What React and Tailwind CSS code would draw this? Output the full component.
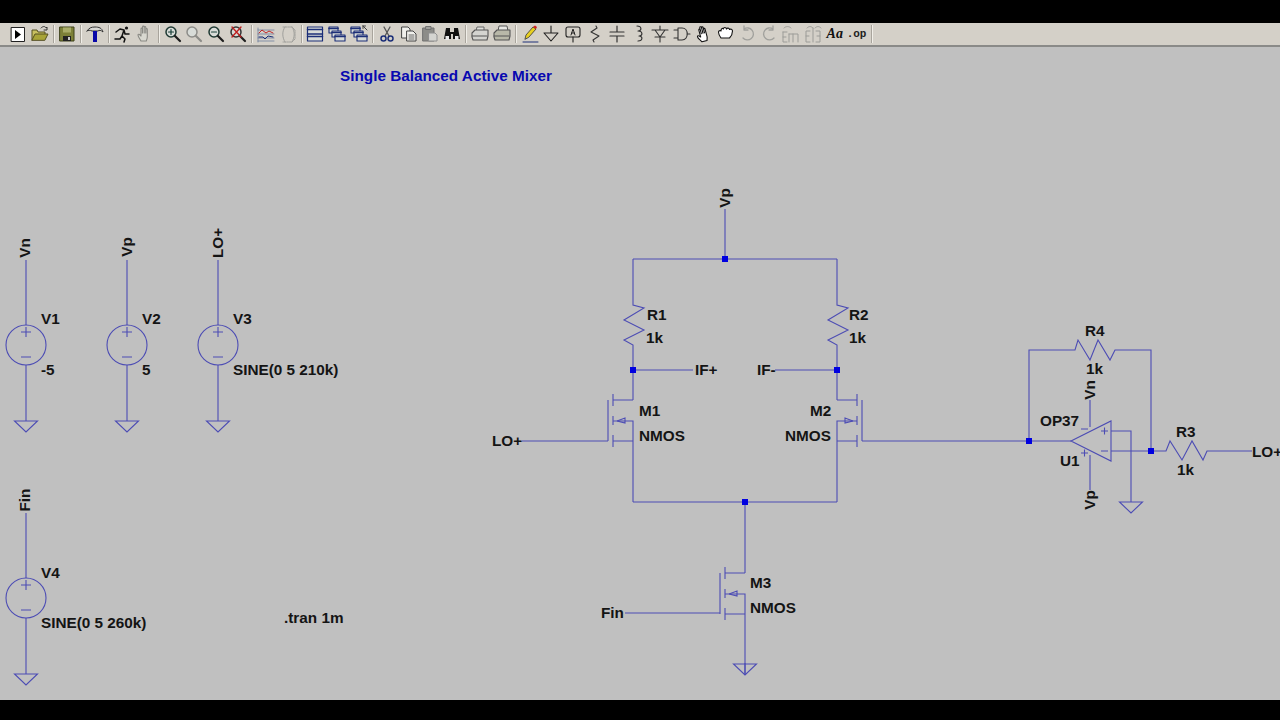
import React from 'react';

const WIRE = '#4c4cb4';

const Icon = ({ children }) => (
  <svg viewBox="0 0 18 18" className="w-[18px] h-[18px]" fill="none" strokeLinecap="round" strokeLinejoin="round">
    {children}
  </svg>
);

const Magnifier = ({ lens = '#1d1d1d', handle = '#1d1d1d', children }) => (
  <>
    <circle cx="7" cy="7" r="5" stroke={lens} strokeWidth="1.5" fill="#d8dcd8" />
    <path d="M11 11l5 5" stroke={handle} strokeWidth="2.2" />
    {children}
  </>
);

const Hand = ({ fill, stroke }) => (
  <path
    d="M5 16c-1-2-3-4-3-6 0-1 1.5-1 2 0l1 1V4c0-1.200 1.500-1.200 1.500 0v4-6c0-1.200 1.700-1.200 1.700 0v6-5.500c0-1.200 1.600-1.200 1.600 0V8 4.500c0-1.200 1.500-1.200 1.500 0V12c0 2-1 3-1 4z"
    fill={fill}
    stroke={stroke}
    strokeWidth="1.100"
  />
);

const Windows = ({ arrow }) => (
  <>
    <rect x="1" y="2" width="9" height="6" fill="#d8dcd8" stroke="#1c2f78" strokeWidth="1.100" />
    <path d="M1 3.500h9" stroke="#1c2f78" strokeWidth="1.600" />
    <rect x="4" y="6" width="9" height="6" fill="#d8dcd8" stroke="#1c2f78" strokeWidth="1.100" />
    <path d="M4 7.500h9" stroke="#1c2f78" strokeWidth="1.600" />
    <rect x="7" y="10" width="10" height="6" fill="#d8dcd8" stroke="#1c2f78" strokeWidth="1.100" />
    <path d="M7 11.500h10" stroke="#1c2f78" strokeWidth="1.600" />
    {arrow && <path d="M13 1l4 4M13 1h2.500M13 1v2.500" stroke="#444" strokeWidth="1" />}
  </>
);

const Printer = ({ dark }) => (
  <>
    {dark && <path d="M5 6l1-5h8l1 5z" fill="#e8e8e4" stroke="#555" strokeWidth="1" />}
    {!dark && <path d="M5 6l1-4h7v4z" fill="#e0e0dc" stroke="#666" strokeWidth="1" />}
    <path d="M1 8l3-3h13v6l-1 4H2l-1-3z" fill={dark ? '#b8b8a8' : '#d4d4d0'} stroke="#555" strokeWidth="1.100" />
    <path d="M1 11h15" stroke="#555" strokeWidth="1" />
  </>
);

const icons = [
  // simulation file group
  [
    <Icon key="new">
      <rect x="2.500" y="2.500" width="13" height="14" fill="#fff" stroke="#222" />
      <path d="M6 5l6 4.500-6 4.500z" fill="#000" />
    </Icon>,
    <Icon key="open">
      <path d="M1 15V5h5l1 2h7v2" fill="#c8c060" stroke="#555020" />
      <path d="M1 15l3-6h13l-3 6z" fill="#a8a438" stroke="#555020" />
      <path d="M10 3c2-2 4-2 5 0l1-1v3h-3" stroke="#333" strokeWidth="1" />
    </Icon>,
  ],
  [
    <Icon key="save">
      <path d="M2 2h14v14H2z" fill="#7c8038" stroke="#3c4018" />
      <rect x="5" y="2.500" width="8" height="5" fill="#a8ac68" />
      <rect x="5" y="11" width="8" height="5" fill="#222" />
      <rect x="10" y="12" width="2" height="3" fill="#ccc" />
    </Icon>,
  ],
  [
    <Icon key="hammer">
      <path d="M1 6c2-3 4-4 8-4s7 1 8 5c-2-2-4-2-5-1H6C4 5 2 5 1 6z" fill="#d8d8d4" stroke="#333" />
      <rect x="7" y="6" width="4" height="11" fill="#0808a8" />
    </Icon>,
  ],
  [
    <Icon key="run">
      <circle cx="12.500" cy="3" r="1.600" fill="#111" />
      <path d="M2 7l4-3 4 1 1 4 4 0M10 5L8 11l3 3-1 3M8 11l-2 3H1" stroke="#111" strokeWidth="1.500" />
    </Icon>,
    <Icon key="halt">
      <Hand fill="#d8d8d0" stroke="#8a8a84" />
    </Icon>,
  ],
  [
    <Icon key="zoomin">
      <Magnifier lens="#1f3a34" >
        <path d="M4.500 7h5M7 4.500v5" stroke="#184038" strokeWidth="1.200" />
      </Magnifier>
    </Icon>,
    <Icon key="zoomfit">
      <Magnifier lens="#8c8c88" handle="#8c8c88" />
    </Icon>,
    <Icon key="zoomout">
      <Magnifier lens="#1f3a34">
        <path d="M4.500 7h5" stroke="#184038" strokeWidth="1.200" />
      </Magnifier>
    </Icon>,
    <Icon key="zoomoff">
      <Magnifier lens="#333">
        <path d="M3 2l9 10M12 2L3 12" stroke="#c02020" strokeWidth="1.400" />
      </Magnifier>
    </Icon>,
  ],
  [
    <Icon key="wave">
      <path d="M1 3v14M1 16h16M1 5h16M1 9h16M1 13h16" stroke="#7080a0" strokeWidth="0.800" />
      <path d="M2 8l3-3 4 3 3-2 4 2" stroke="#c02828" strokeWidth="1" />
      <path d="M2 12h4l2 2 3-3 5 1" stroke="#1c2f78" strokeWidth="1" />
    </Icon>,
    <Icon key="wavegray">
      <path d="M4 2h9l3 3v9l-3 3H4" stroke="#a0a09c" strokeWidth="1" strokeDasharray="1.500 1" />
      <path d="M6 2c-3 4-3 10 0 15M13 2c3 4 3 10 0 15" stroke="#a0a09c" strokeWidth="1" />
    </Icon>,
  ],
  [
    <Icon key="tile-h">
      <rect x="1.500" y="2" width="15" height="14" fill="#d8dcd8" stroke="#1c2f78" strokeWidth="1.200" />
      <path d="M1.500 4.500h15M1.500 9h15M1.500 11.500h15" stroke="#1c2f78" strokeWidth="1.500" />
    </Icon>,
    <Icon key="cascade">
      <Windows />
    </Icon>,
    <Icon key="arrange">
      <Windows arrow />
    </Icon>,
  ],
  [
    <Icon key="cut">
      <path d="M6 2l5 9M12 2l-5 9" stroke="#555" strokeWidth="1.300" />
      <circle cx="5.500" cy="13.500" r="2.500" stroke="#1c2f78" strokeWidth="1.500" />
      <circle cx="12.500" cy="13.500" r="2.500" stroke="#1c2f78" strokeWidth="1.500" />
    </Icon>,
    <Icon key="copy">
      <path d="M2 2h6l2 2v9H2z" fill="#f0f0ec" stroke="#444" />
      <path d="M7 6h6l3 3v7H7z" fill="#f0f0ec" stroke="#444" />
      <path d="M9 10h5M9 12h5M9 14h5" stroke="#444" strokeWidth="0.800" />
    </Icon>,
    <Icon key="paste">
      <rect x="2" y="3" width="11" height="13" fill="#8c8c88" stroke="#707070" />
      <rect x="5" y="1.500" width="5" height="3" fill="#a0a09c" stroke="#707070" />
      <path d="M8 8h6l2 2v6H8z" fill="#d4d4d0" stroke="#909090" />
    </Icon>,
    <Icon key="find">
      <path d="M3 3h4v4h4V3h4l2 11H10V9H8v5H1z" fill="#111" />
      <rect x="2.500" y="11" width="3.500" height="4" fill="#e8e8e8" />
      <rect x="12" y="11" width="3.500" height="4" fill="#e8e8e8" />
    </Icon>,
  ],
  [
    <Icon key="print">
      <Printer />
    </Icon>,
    <Icon key="setup">
      <Printer dark />
    </Icon>,
  ],
  [
    <Icon key="pencil">
      <path d="M2 17h15" stroke="#1c2f78" strokeWidth="1" />
      <path d="M4 14l1-4 7-8 3 2-7 8z" fill="#e8d020" stroke="#333" strokeWidth="0.800" />
      <path d="M12 2l3 2 1-2-2-1.500z" fill="#d02020" />
    </Icon>,
    <Icon key="gnd">
      <path d="M9 1v7M2 8h14L9 16z" stroke="#222" strokeWidth="1.100" />
    </Icon>,
    <Icon key="label">
      <rect x="2" y="2" width="14" height="10" rx="2" stroke="#222" strokeWidth="1.100" />
      <path d="M9 12v5" stroke="#222" strokeWidth="1.100" />
      <path d="M7 10l2-6 2 6M7.700 8h2.600" stroke="#222" strokeWidth="1" />
    </Icon>,
    <Icon key="res">
      <path d="M10 1l1 2-6 4 8 4-6 4 1 2" stroke="#333" strokeWidth="1.100" />
    </Icon>,
    <Icon key="cap">
      <path d="M9 1v6M2 7h14M2 11h14M9 11v6" stroke="#333" strokeWidth="1.200" />
    </Icon>,
    <Icon key="ind">
      <path d="M7 1c5 0 5 5 1 5 5 0 5 5 1 5 4 0 4 5-1 5" stroke="#333" strokeWidth="1.200" />
    </Icon>,
    <Icon key="diode">
      <path d="M1 5h16M4 5l5 7 5-7M9 1v4M4 12h10M9 12v5" stroke="#333" strokeWidth="1.100" />
    </Icon>,
    <Icon key="comp">
      <path d="M1 5h4M1 13h4M5 3v12h4c7 0 7-12 0-12zM14 9h3" stroke="#333" strokeWidth="1.100" />
    </Icon>,
    <Icon key="move">
      <g transform="rotate(-15 9 9)">
        <Hand fill="#fff" stroke="#111" />
      </g>
    </Icon>,
    <Icon key="drag">
      <path d="M4 13C2 10 1 7 2 6s2 0 2 0c0-3 2-3 2.500-2 0-2 2.500-2 3 0 .5-1.500 3-1 3 .5 1-1 3 0 3 1.500 0 4-2 6-3 7z" fill="#fff" stroke="#111" strokeWidth="1.100" />
    </Icon>,
    <Icon key="undo">
      <path d="M5 4a6 6 0 1 1-1 9M5 1v4h4" stroke="#a0a09c" strokeWidth="1.300" />
    </Icon>,
    <Icon key="redo">
      <path d="M13 4a6 6 0 1 0 1 9M13 1v4H9" stroke="#a0a09c" strokeWidth="1.300" />
    </Icon>,
    <Icon key="rot">
      <path d="M1 7h4M1 7v10h4M1 12h3M7 9v8M7 9h9v8M11 9v8M2 3c2-2 5-2 7 0" stroke="#9c9c98" strokeWidth="1" />
    </Icon>,
    <Icon key="mirror">
      <path d="M6 6H2v11h4M2 11h3M12 6h4v11h-4M16 11h-3M9 3v14M3 3c2-2 4-2 6 0M11 3c2-2 4-2 6 0" stroke="#9c9c98" strokeWidth="1" />
    </Icon>,
    <span key="text" className="font-['Liberation_Serif'] font-bold italic text-[14px] leading-none text-[#111]">Aa</span>,
    <span key="op" className="font-['Liberation_Mono'] font-bold text-[11px] leading-none text-[#222]">.op</span>,
  ],
];

const Toolbar = () => (
  <div className="flex h-[22px] items-center bg-[#d4d0c8] border-b-2 border-[#8a8a88] pl-[7px] box-content h-[20px]">
    {icons.map((group, i) => (
      <React.Fragment key={i}>
        {i > 0 && <div className="w-[2px] h-[18px] mx-[2px] border-l border-r border-l-[#a8a49c] border-r-[#f0eee8]" />}
        {group.map((icon) => (
          <div key={icon.key} className="flex w-[21.800px] h-[20px] items-center justify-center">
            {icon}
          </div>
        ))}
      </React.Fragment>
    ))}
    <div className="w-[2px] h-[18px] ml-[4px] border-l border-r border-l-[#a8a49c] border-r-[#f0eee8]" />
  </div>
);

const Label = ({ className, children }) => (
  <span className={`absolute -translate-y-1/2 whitespace-nowrap font-['Liberation_Sans'] font-bold text-[15.300px] leading-none text-[#141414] ${className}`}>
    {children}
  </span>
);

const Ground = ({ x, y }) => <path d={`M${x - 11.500} ${y}h23L${x} ${y + 11}z`} />;

const Source = ({ x, y, top, bottom }) => (
  <>
    <path d={`M${x} ${top}V${y - 20}M${x} ${y + 20}V${bottom}`} />
    <circle cx={x} cy={y} r="20" />
    <path d={`M${x - 5} ${y - 13}h10M${x} ${y - 18}v10M${x - 5} ${y + 12}h10`} />
    <Ground x={x} y={bottom} />
  </>
);

const Nmos = ({ x, y, dir }) => {
  // x is the drain/source rail, y the drain line, dir -1 for a gate on the left
  const c = x + dir * 20;
  const g = x + dir * 25;
  return (
    <>
      <path d={`M${x} ${y}H${c}M${c} ${y - 6}v12M${c} ${y + 16}v9M${c} ${y + 35}v12M${g} ${y}V${y + 41}M${c} ${y + 41}H${x}`} />
      <path d={`M${c} ${y + 21}H${x}V${y + 102 - 0}`} />
      <path d={`M${c + dir * -4} ${y + 21}l${dir * -8} -3v5l${dir * 8} -2`} />
    </>
  );
};

const Schematic = () => (
  <svg viewBox="0 45 1280 652" className="absolute inset-0 w-[1280px] h-[652px]" fill="none" stroke={WIRE} strokeWidth="1.100">
    <Source x={26} y={343} top={258} bottom={419} />
    <Source x={127} y={343} top={258} bottom={419} />
    <Source x={218} y={343} top={258} bottom={419} />
    <Source x={26} y={596} top={511} bottom={672} />

    {/* top rail */}
    <path d="M725 207V257M633 257H837" />
    <path d="M633 257V303L644 306 624 318 644 328 624 338 633 343V398" />
    <path d="M837 257V303L848 306 828 318 848 328 828 338 837 343V398" />
    <path d="M633 368H693M775 368H837" />

    {/* mixer pair */}
    <Nmos x={633} y={398} dir={-1} />
    <Nmos x={837} y={398} dir={1} />
    <path d="M522 439H608M862 439H1071" />
    <path d="M633 500H837" />
    <path d="M745 500V571" />
    <Nmos x={745} y={571} dir={-1} />
    <path d="M625 611H720M745 661V673" />
    <Ground x={745} y={662} />

    {/* output stage */}
    <path d="M1029 439V348H1075L1078 338 1090 358 1098 338 1110 358 1115 348H1151V449" />
    <path d="M1071 439L1111 419V459z" />
    <path d="M1081 427h7M1081 451h7M1084.500 447.500v7M1101 429h7M1104.500 425.500v7M1101 449h7" />
    <path d="M1090 398V425M1090 453V488" />
    <path d="M1111 429H1131V500" />
    <Ground x={1131} y={500} />
    <path d="M1111 449H1166L1170 439 1182 458 1192 439 1203 458 1207 449H1252" />

    {/* junctions */}
    <g fill="#0000e0" stroke="none">
      <rect x="722" y="254" width="6" height="6" />
      <rect x="630" y="365" width="6" height="6" />
      <rect x="834" y="365" width="6" height="6" />
      <rect x="742" y="497" width="6" height="6" />
      <rect x="1026" y="436" width="6" height="6" />
      <rect x="1148" y="446" width="6" height="6" />
    </g>
  </svg>
);

const Labels = () => (
  <>
    <span className="absolute left-[340px] top-[29px] -translate-y-1/2 whitespace-nowrap font-['Liberation_Sans'] font-bold text-[15.300px] leading-none text-[#0808b0]">
      Single Balanced Active Mixer
    </span>

    <Label className="left-[25px] top-[201px] -translate-x-1/2 -rotate-90">Vn</Label>
    <Label className="left-[127px] top-[200px] -translate-x-1/2 -rotate-90">Vp</Label>
    <Label className="left-[218px] top-[196px] -translate-x-1/2 -rotate-90">LO+</Label>
    <Label className="left-[25px] top-[453px] -translate-x-1/2 -rotate-90">Fin</Label>
    <Label className="left-[725px] top-[151px] -translate-x-1/2 -rotate-90">Vp</Label>
    <Label className="left-[1090px] top-[343px] -translate-x-1/2 -rotate-90">Vn</Label>
    <Label className="left-[1090px] top-[453px] -translate-x-1/2 -rotate-90">Vp</Label>

    <Label className="left-[41px] top-[272px]">V1</Label>
    <Label className="left-[41px] top-[323px]">-5</Label>
    <Label className="left-[142px] top-[272px]">V2</Label>
    <Label className="left-[142px] top-[323px]">5</Label>
    <Label className="left-[233px] top-[272px]">V3</Label>
    <Label className="left-[233px] top-[323px]">SINE(0 5 210k)</Label>
    <Label className="left-[41px] top-[526px]">V4</Label>
    <Label className="left-[41px] top-[576px]">SINE(0 5 260k)</Label>
    <Label className="left-[284px] top-[571px]">.tran 1m</Label>

    <Label className="left-[647px] top-[268px]">R1</Label>
    <Label className="left-[646px] top-[291px]">1k</Label>
    <Label className="left-[849px] top-[268px]">R2</Label>
    <Label className="left-[849px] top-[291px]">1k</Label>
    <Label className="left-[695px] top-[323px]">IF+</Label>
    <Label className="left-[757px] top-[323px]">IF-</Label>
    <Label className="left-[639px] top-[364px]">M1</Label>
    <Label className="left-[639px] top-[389px]">NMOS</Label>
    <Label className="left-[810px] top-[364px]">M2</Label>
    <Label className="left-[785px] top-[389px]">NMOS</Label>
    <Label className="left-[492px] top-[394px]">LO+</Label>
    <Label className="left-[750px] top-[536px]">M3</Label>
    <Label className="left-[750px] top-[561px]">NMOS</Label>
    <Label className="left-[601px] top-[566px]">Fin</Label>

    <Label className="left-[1085px] top-[284px]">R4</Label>
    <Label className="left-[1086px] top-[322px]">1k</Label>
    <Label className="left-[1040px] top-[374px]">OP37</Label>
    <Label className="left-[1060px] top-[414px]">U1</Label>
    <Label className="left-[1176px] top-[385px]">R3</Label>
    <Label className="left-[1177px] top-[423px]">1k</Label>
    <Label className="left-[1252px] top-[405px]">LO+</Label>
  </>
);

export default function App() {
  return (
    <div className="flex flex-col w-[1280px] h-[720px] overflow-hidden bg-black">
      <div className="h-[23px] bg-black" />
      <Toolbar />
      <div className="relative h-[653px] bg-[#c0c0c0]">
        <Schematic />
        <Labels />
      </div>
      <div className="flex-1 bg-black" />
    </div>
  );
}
